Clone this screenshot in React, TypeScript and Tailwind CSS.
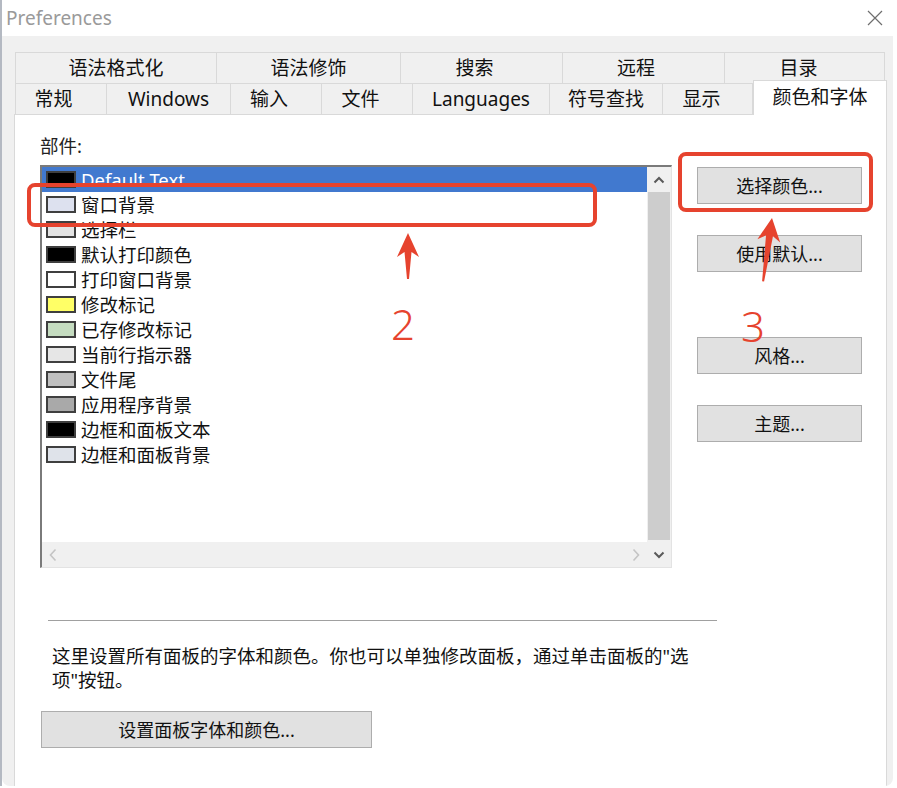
import React from "react";

const RED = "#e6432e";

type Tab = { label: string; w: string; first?: boolean; pad?: string };

const row1: Tab[] = [
  { label: "语法格式化", w: "w-[202px]", first: true },
  { label: "语法修饰", w: "w-[184px]" },
  { label: "搜索", w: "w-[162px]", pad: "pr-[14px]" },
  { label: "远程", w: "w-[162px]", pad: "pr-[15px]" },
  { label: "目录", w: "w-[160px]", pad: "pr-[12px]" },
];

const row2: Tab[] = [
  { label: "常规", w: "w-[92px]", first: true, pad: "pr-[15px]" },
  { label: "Windows", w: "w-[124px]" },
  { label: "输入", w: "w-[91px]", pad: "pr-[14px]" },
  { label: "文件", w: "w-[91px]", pad: "pr-[13px]" },
  { label: "Languages", w: "w-[137px]" },
  { label: "符号查找", w: "w-[113px]" },
  { label: "显示", w: "w-[90px]", pad: "pr-[12px]" },
];

const items: { label: string; sw: string; sel?: boolean }[] = [
  { label: "Default Text", sw: "bg-[#000000]", sel: true },
  { label: "窗口背景", sw: "bg-[#dde1ef]" },
  { label: "选择栏", sw: "bg-[#e3e3e3]" },
  { label: "默认打印颜色", sw: "bg-[#000000]" },
  { label: "打印窗口背景", sw: "bg-[#ffffff]" },
  { label: "修改标记", sw: "bg-[#ffff66]" },
  { label: "已存修改标记", sw: "bg-[#c5dcc0]" },
  { label: "当前行指示器", sw: "bg-[#e6e6e6]" },
  { label: "文件尾", sw: "bg-[#c0c0c0]" },
  { label: "应用程序背景", sw: "bg-[#a9a9a9]" },
  { label: "边框和面板文本", sw: "bg-[#000000]" },
  { label: "边框和面板背景", sw: "bg-[#dfe3ea]" },
];

function TabCell({ t }: { t: Tab }) {
  return (
    <div
      className={`${t.w} ${t.pad ?? ""} h-[31px] shrink-0 flex items-center justify-center border-t border-r border-[#d9d9d9] text-[19px] leading-none text-[#111] ${
        t.first ? "border-l" : ""
      }`}
    >
      {t.label}
    </div>
  );
}

function Btn({ label, cls }: { label: string; cls: string }) {
  return (
    <div
      className={`${cls} h-[37px] bg-[#e1e1e1] border border-[#adadad] flex items-center justify-center text-[18px] leading-none text-[#111]`}
    >
      {label}
    </div>
  );
}

function ListBox() {
  return (
    <div className="w-[632px] h-[403px] shrink-0 flex bg-white border-t-2 border-l-2 border-r border-b border-t-[#7a7a7a] border-l-[#7a7a7a] border-r-[#e3e3e3] border-b-[#e3e3e3]">
      <div className="flex-1 flex flex-col min-w-0">
        <div className="flex-1 flex flex-col overflow-hidden">
          {items.map((it) => (
            <div
              key={it.label}
              className={`h-[25px] shrink-0 flex items-center pl-[4px] ${
                it.sel ? "bg-[#4179cf] text-white" : "text-[#111]"
              }`}
            >
              <div className={`w-[30px] h-[17px] border-2 border-[#3f3f3f] ${it.sw}`} />
              <span className="ml-[5px] text-[18.5px] leading-none translate-y-[1px]">{it.label}</span>
            </div>
          ))}
        </div>
        <div className="h-[25px] shrink-0 bg-[#f0f0f0] flex items-center justify-between px-[7px]">
          <svg width="8" height="14" viewBox="0 0 8 14">
            <path d="M6.5 1.5L1.5 7L6.5 12.5" fill="none" stroke="#c4c4c4" strokeWidth="1.6" />
          </svg>
          <svg width="8" height="14" viewBox="0 0 8 14">
            <path d="M1.5 1.5L6.5 7L1.5 12.5" fill="none" stroke="#c4c4c4" strokeWidth="1.6" />
          </svg>
        </div>
      </div>
      <div className="w-[24px] shrink-0 flex flex-col bg-[#f0f0f0]">
        <div className="h-[25px] flex items-center justify-center">
          <svg width="12" height="8" viewBox="0 0 12 8">
            <path d="M1.5 6.5L6 2L10.5 6.5" fill="none" stroke="#5a5a5a" strokeWidth="2" />
          </svg>
        </div>
        <div className="flex-1 bg-[#cdcdcd] mx-px mb-[2px]" />
        <div className="h-[25px] flex items-center justify-center">
          <svg width="12" height="8" viewBox="0 0 12 8">
            <path d="M1.5 1.5L6 6L10.5 1.5" fill="none" stroke="#5a5a5a" strokeWidth="2" />
          </svg>
        </div>
      </div>
    </div>
  );
}

export default function App() {
  return (
    <div className="w-[897px] h-[788px] bg-white relative overflow-hidden font-['Noto_Sans','Noto_Sans_CJK_SC',sans-serif] text-black">
      <div className="flex h-[786px]">
        <div className="w-[2px] h-full bg-[#b4b9c2]" />
        <div className="w-[891px] h-full flex flex-col rounded-b-[8px] overflow-hidden">
          {/* title bar */}
          <div className="h-[36px] shrink-0 bg-white flex items-center justify-between pl-[4px] pr-[10px]">
            <span className="text-[19px] leading-none text-[#9a9a9a]">Preferences</span>
            <svg width="16" height="16" viewBox="0 0 16 16">
              <path d="M1 1L15 15M15 1L1 15" fill="none" stroke="#6e6e6e" strokeWidth="1.2" />
            </svg>
          </div>
          {/* body */}
          <div className="flex-1 min-h-0 bg-[#f0f0f0] flex flex-col pl-[12px] pr-[6px] pt-[16px]">
            <div className="flex ml-[1px] shrink-0">
              {row1.map((t) => (
                <TabCell key={t.label} t={t} />
              ))}
            </div>
            <div className="flex items-end ml-[1px] h-[31px] shrink-0">
              {row2.map((t) => (
                <TabCell key={t.label} t={t} />
              ))}
              <div className="w-[134px] h-[35px] -mb-[1px] relative z-10 shrink-0 bg-white border-t border-l border-r border-[#d9d9d9] flex items-center justify-center pb-[2px] text-[19px] leading-none text-[#111]">
                颜色和字体
              </div>
            </div>
            {/* panel */}
            <div className="flex-1 w-[873px] bg-white border border-b-0 border-[#d9d9d9] pl-[25px] pt-[19px] flex flex-col">
              <div className="h-[24px] leading-[24px] text-[18.5px] text-[#222]">部件:</div>
              <div className="flex items-start mt-[7px]">
                <ListBox />
                <div className="ml-[25px] mt-[2px] flex flex-col">
                  <Btn label="选择颜色..." cls="w-[165px]" />
                  <div className="mt-[31px]">
                    <Btn label="使用默认..." cls="w-[165px]" />
                  </div>
                  <div className="mt-[65px]">
                    <Btn label="风格..." cls="w-[165px]" />
                  </div>
                  <div className="mt-[31px]">
                    <Btn label="主题..." cls="w-[165px]" />
                  </div>
                </div>
              </div>
              <div className="ml-[8px] mt-[52px] w-[669px] h-px bg-[#a0a0a0]" />
              <div className="ml-[12px] mt-[23px] text-[18.5px] leading-[24px] text-[#111]">
                这里设置所有面板的字体和颜色。你也可以单独修改面板，通过单击面板的"选
                <br />
                项"按钮。
              </div>
              <div className="mt-[19px] ml-[1px]">
                <Btn label="设置面板字体和颜色..." cls="w-[331px]" />
              </div>
            </div>
          </div>
        </div>
      </div>

      {/* annotations */}
      <svg
        className="absolute left-0 top-0 pointer-events-none"
        width="897"
        height="788"
        viewBox="0 0 897 788"
      >
        <rect x="29" y="185" width="566" height="40" rx="6" fill="none" stroke={RED} strokeWidth="4" />
        <rect x="680" y="154" width="191" height="56" rx="6" fill="none" stroke={RED} strokeWidth="4" />
        <polygon
          transform="translate(408 233)"
          points="0,0 11,24 3.5,19 1,46 -1,46 -3.5,19 -11,24"
          fill={RED}
        />
        <polygon
          transform="translate(772 218) rotate(8)"
          points="0,0 11.5,23 3.5,18 1,64 -1,64 -3.5,18 -11.5,23"
          fill={RED}
        />
      </svg>
      <div className="absolute left-[391px] top-[303px] text-[42px] leading-none font-light text-[#e6432e] font-['Noto_Sans',sans-serif]">
        2
      </div>
      <div className="absolute left-[741px] top-[305px] text-[42px] leading-none font-light text-[#e6432e] font-['Noto_Sans',sans-serif]">
        3
      </div>
    </div>
  );
}
